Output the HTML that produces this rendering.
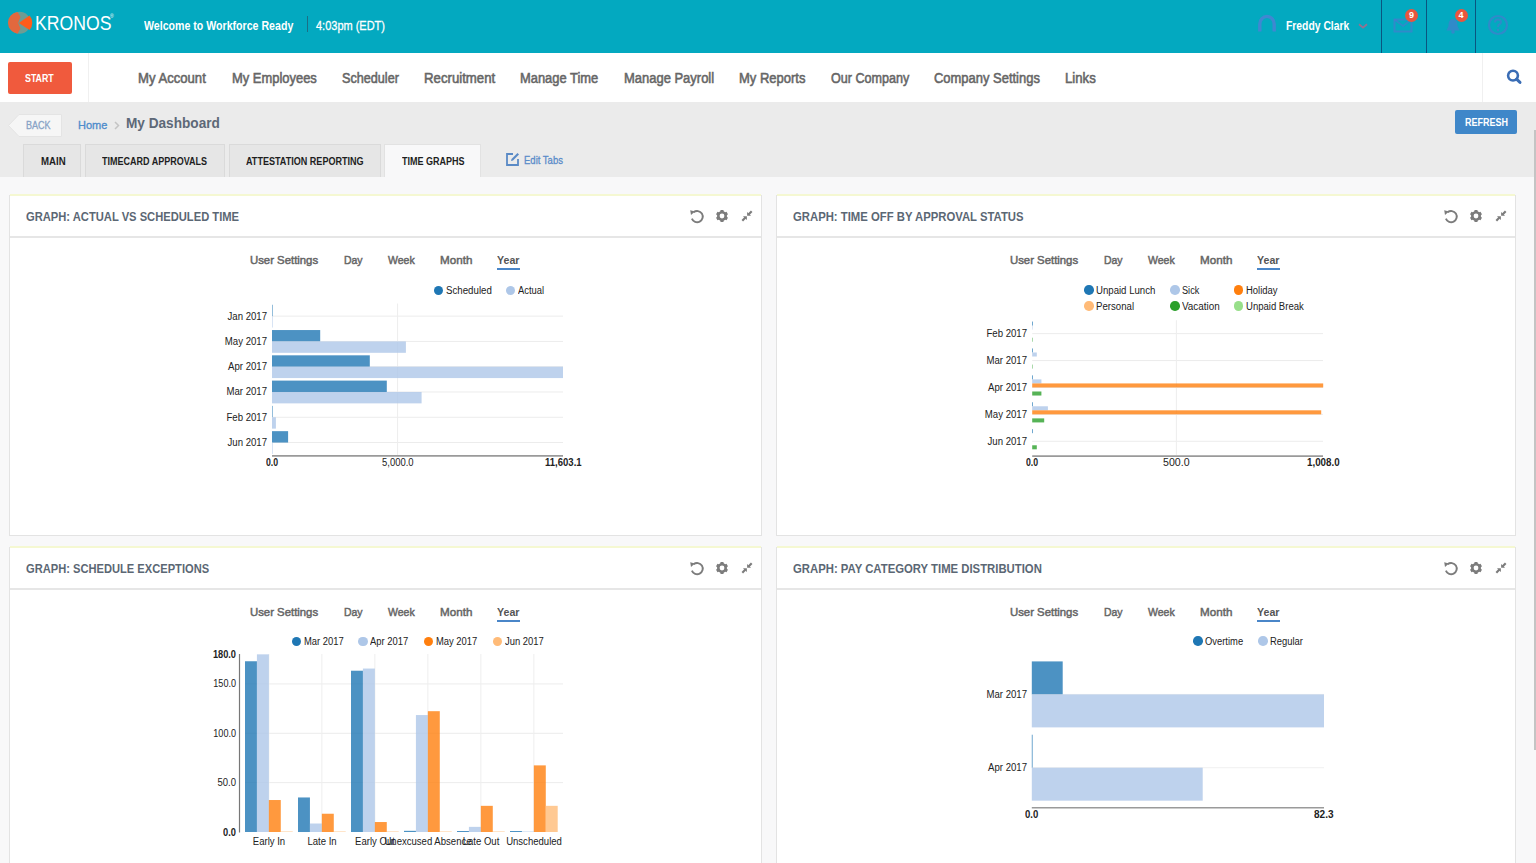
<!DOCTYPE html><html><head><meta charset="utf-8"><style>
*{margin:0;padding:0;box-sizing:border-box}
html,body{width:1536px;height:863px;overflow:hidden;background:#f8f8f9;font-family:"Liberation Sans",sans-serif;position:relative}
.a{position:absolute;white-space:nowrap}
svg text{font-family:"Liberation Sans",sans-serif}
</style></head><body>
<div class="a" style="left:0;top:0;width:1536px;height:53px;background:#03a9c0"></div>
<svg class="a" style="left:0;top:0" width="40" height="53" viewBox="0 0 40 53"><circle cx="19.6" cy="22.8" r="11" fill="#6f9c93"/><path d="M17.5 11.9 A11 11 0 0 0 17.5 33.7 L20.5 28.5 L18.2 23 L20.5 16.8 Z" fill="#e2683e"/><path d="M18.8 23 L29.6 15.6 A11 11 0 0 1 29.6 30 Z" fill="#ff5c1a"/></svg>
<div class="a" id="t1" style="left:34.95px;top:11px;font-size:20.50px;line-height:23px;font-weight:normal;color:#fff;transform:scaleX(0.8600);transform-origin:0 0;-webkit-text-stroke:0.5px #03a9c0;paint-order:stroke fill">KRONOS</div>
<div class="a" style="left:110px;top:13px;font-size:5px;color:#fff">&#174;</div>
<div class="a" id="t2" style="left:144.00px;top:18px;font-size:12.80px;line-height:15px;font-weight:bold;color:#fff;transform:scaleX(0.8286);transform-origin:0 0;">Welcome to Workforce Ready</div>
<div class="a" style="left:307px;top:16px;width:1px;height:16px;background:#1b6f86"></div>
<div class="a" id="t3" style="left:316.13px;top:18px;font-size:12.80px;line-height:15px;font-weight:normal;color:#fff;transform:scaleX(0.8583);transform-origin:0 0;-webkit-text-stroke:0.3px #fff">4:03pm (EDT)</div>
<svg class="a" style="left:1256px;top:14px" width="22" height="22" viewBox="0 0 22 22"><path d="M3.8 17.5 L3.8 10 A7.2 7.6 0 0 1 18.2 10 L18.2 17.5" fill="none" stroke="#8a60e6" stroke-width="3.4" opacity="0.45"/></svg>
<div class="a" id="t4" style="left:1286.00px;top:18px;font-size:12.80px;line-height:15px;font-weight:bold;color:#fff;transform:scaleX(0.8090);transform-origin:0 0;">Freddy Clark</div>
<svg class="a" style="left:1358px;top:23px" width="10" height="6" viewBox="0 0 10 6"><path d="M1 1.2 L5 4.6 L9 1.2" fill="none" stroke="#d4587a" stroke-width="1.8" opacity="0.7"/></svg>
<div class="a" style="left:1381px;top:0;width:1px;height:53px;background:#0a5580"></div>
<div class="a" style="left:1426px;top:0;width:1px;height:53px;background:#0a5580"></div>
<div class="a" style="left:1475px;top:0;width:1px;height:53px;background:#0a5580"></div>
<svg class="a" style="left:1392px;top:16px" width="22" height="18" viewBox="0 0 22 18">
<rect x="2.5" y="3.5" width="17" height="12" fill="none" stroke="#6f5fd6" stroke-width="2" opacity="0.42"/>
<path d="M2.5 3.5 L11 10 L19.5 3.5" fill="none" stroke="#6f5fd6" stroke-width="1.6" opacity="0.42"/></svg>
<svg class="a" style="left:1444px;top:17px" width="18" height="17" viewBox="0 0 18 17">
<path d="M9 2 C5 2 4.5 6 4.5 9 L2.5 13.5 L15.5 13.5 L13.5 9 C13.5 6 13 2 9 2 Z" fill="#6f5fd6" opacity="0.42"/>
<circle cx="9" cy="15" r="1.8" fill="#6f5fd6" opacity="0.42"/></svg>
<div class="a" style="left:1405.0px;top:9px;width:13px;height:13px;border-radius:50%;background:#e9553d;color:#fff;font-size:9px;font-weight:bold;text-align:center;line-height:13px">9</div>
<div class="a" style="left:1454.5px;top:9px;width:13px;height:13px;border-radius:50%;background:#e9553d;color:#fff;font-size:9px;font-weight:bold;text-align:center;line-height:13px">4</div>
<svg class="a" style="left:1487px;top:14px" width="22" height="22" viewBox="0 0 22 22">
<circle cx="11" cy="11" r="9" fill="none" stroke="#6f5fd6" stroke-width="2.2" opacity="0.42"/>
<path d="M8 8.5 Q8 5.5 11 5.5 Q14 5.5 14 8.3 Q14 10 11.5 11 L11 13" fill="none" stroke="#6f5fd6" stroke-width="2" opacity="0.42"/>
<circle cx="11" cy="16" r="1.2" fill="#6f5fd6" opacity="0.42"/></svg>
<div class="a" style="left:0;top:53px;width:1536px;height:49px;background:#fff"></div>
<div class="a" style="left:8px;top:62px;width:64px;height:32px;background:#f05a3d;border-radius:2px"></div>
<div class="a" id="t5" style="left:24.70px;top:72px;font-size:10.60px;line-height:12px;font-weight:bold;color:#fff;transform:scaleX(0.8331);transform-origin:0 0;">START</div>
<div class="a" style="left:88px;top:53px;width:1px;height:49px;background:#f0f0f0"></div>
<div class="a" style="left:1482px;top:53px;width:1px;height:49px;background:#f0f0f0"></div>
<div class="a" id="t6" style="left:138.12px;top:70px;font-size:14.00px;line-height:16px;font-weight:normal;color:#666;transform:scaleX(0.9368);transform-origin:0 0;-webkit-text-stroke:0.55px #666">My Account</div>
<div class="a" id="t7" style="left:231.73px;top:70px;font-size:14.00px;line-height:16px;font-weight:normal;color:#666;transform:scaleX(0.9239);transform-origin:0 0;-webkit-text-stroke:0.55px #666">My Employees</div>
<div class="a" id="t8" style="left:342.05px;top:70px;font-size:14.00px;line-height:16px;font-weight:normal;color:#666;transform:scaleX(0.9026);transform-origin:0 0;-webkit-text-stroke:0.55px #666">Scheduler</div>
<div class="a" id="t9" style="left:424.22px;top:70px;font-size:14.00px;line-height:16px;font-weight:normal;color:#666;transform:scaleX(0.9437);transform-origin:0 0;-webkit-text-stroke:0.55px #666">Recruitment</div>
<div class="a" id="t10" style="left:520.13px;top:70px;font-size:14.00px;line-height:16px;font-weight:normal;color:#666;transform:scaleX(0.9218);transform-origin:0 0;-webkit-text-stroke:0.55px #666">Manage Time</div>
<div class="a" id="t11" style="left:623.83px;top:70px;font-size:14.00px;line-height:16px;font-weight:normal;color:#666;transform:scaleX(0.9264);transform-origin:0 0;-webkit-text-stroke:0.55px #666">Manage Payroll</div>
<div class="a" id="t12" style="left:739.03px;top:70px;font-size:14.00px;line-height:16px;font-weight:normal;color:#666;transform:scaleX(0.9280);transform-origin:0 0;-webkit-text-stroke:0.55px #666">My Reports</div>
<div class="a" id="t13" style="left:830.95px;top:70px;font-size:14.00px;line-height:16px;font-weight:normal;color:#666;transform:scaleX(0.8986);transform-origin:0 0;-webkit-text-stroke:0.55px #666">Our Company</div>
<div class="a" id="t14" style="left:934.46px;top:70px;font-size:14.00px;line-height:16px;font-weight:normal;color:#666;transform:scaleX(0.9257);transform-origin:0 0;-webkit-text-stroke:0.55px #666">Company Settings</div>
<div class="a" id="t15" style="left:1065.12px;top:70px;font-size:14.00px;line-height:16px;font-weight:normal;color:#666;transform:scaleX(0.9431);transform-origin:0 0;-webkit-text-stroke:0.55px #666">Links</div>
<svg class="a" style="left:1505px;top:68px" width="18" height="18" viewBox="0 0 18 18"><circle cx="8" cy="7.6" r="4.9" fill="none" stroke="#3a6db5" stroke-width="2.6"/><path d="M11.6 11.2 L15 14.4" stroke="#3a6db5" stroke-width="3" stroke-linecap="round"/></svg>
<div class="a" style="left:0;top:102px;width:1536px;height:75px;background:#ebebeb"></div>
<svg class="a" style="left:8px;top:114px" width="54" height="23" viewBox="0 0 54 23">
<path d="M0.5 11.5 L11 0.5 L53.5 0.5 L53.5 22.5 L11 22.5 Z" fill="#f6f6f6" stroke="#e4e4e4"/></svg>
<div class="a" id="t16" style="left:26.13px;top:120px;font-size:10.20px;line-height:11px;font-weight:normal;color:#88a3c6;transform:scaleX(0.8850);transform-origin:0 0;-webkit-text-stroke:0.3px #88a3c6">BACK</div>
<div class="a" id="t17" style="left:77.86px;top:118px;font-size:11.80px;line-height:14px;font-weight:normal;color:#4f8ccb;transform:scaleX(0.9331);transform-origin:0 0;-webkit-text-stroke:0.35px #4f8ccb">Home</div>
<svg class="a" style="left:113px;top:121px" width="8" height="9" viewBox="0 0 8 9"><path d="M2 1 L5.5 4.5 L2 8" fill="none" stroke="#c4c4c4" stroke-width="1.5"/></svg>
<div class="a" id="t18" style="left:125.80px;top:115px;font-size:14.70px;line-height:16px;font-weight:bold;color:#5d6877;transform:scaleX(0.9274);transform-origin:0 0;">My Dashboard</div>
<div class="a" style="left:23px;top:144px;width:58px;height:33px;background:#e6e6e6;border:1px solid #dadada;border-bottom:none"></div>
<div class="a" id="t19" style="left:40.60px;top:156px;font-size:10.30px;line-height:11px;font-weight:bold;color:#1e1e1e;transform:scaleX(0.9353);transform-origin:0 0;">MAIN</div>
<div class="a" style="left:85px;top:144px;width:140px;height:33px;background:#e6e6e6;border:1px solid #dadada;border-bottom:none"></div>
<div class="a" id="t20" style="left:102.30px;top:156px;font-size:10.30px;line-height:11px;font-weight:bold;color:#1e1e1e;transform:scaleX(0.8744);transform-origin:0 0;">TIMECARD APPROVALS</div>
<div class="a" style="left:229px;top:144px;width:152px;height:33px;background:#e6e6e6;border:1px solid #dadada;border-bottom:none"></div>
<div class="a" id="t21" style="left:246.00px;top:156px;font-size:10.30px;line-height:11px;font-weight:bold;color:#1e1e1e;transform:scaleX(0.8786);transform-origin:0 0;">ATTESTATION REPORTING</div>
<div class="a" style="left:384px;top:144px;width:97px;height:33px;background:#f8f8f9;border:1px solid #e2e2e2;border-bottom:none"></div>
<div class="a" id="t22" style="left:401.90px;top:156px;font-size:10.30px;line-height:11px;font-weight:bold;color:#1e1e1e;transform:scaleX(0.8752);transform-origin:0 0;">TIME GRAPHS</div>
<svg class="a" style="left:505px;top:152px" width="15" height="15" viewBox="0 0 15 15">
<path d="M8 2 L2 2 L2 13 L13 13 L13 7" fill="none" stroke="#5a8ac6" stroke-width="1.8"/>
<path d="M6 9 L6.5 7 L12.5 1 L14 2.5 L8 8.5 Z" fill="#5a8ac6"/></svg>
<div class="a" id="t23" style="left:523.83px;top:154px;font-size:11.00px;line-height:12px;font-weight:normal;color:#5a8cc9;transform:scaleX(0.8644);transform-origin:0 0;-webkit-text-stroke:0.3px #5a8cc9">Edit Tabs</div>
<div class="a" style="left:1455px;top:110px;width:62px;height:24px;background:#3f87c9;border-radius:2px"></div>
<div class="a" id="t24" style="left:1465.00px;top:116px;font-size:10.50px;line-height:12px;font-weight:bold;color:#fff;transform:scaleX(0.8550);transform-origin:0 0;">REFRESH</div>
<div class="a" style="left:9px;top:195px;width:753px;height:341px;background:#fff;border:1px solid #e3e3e3;border-top:none"></div>
<div class="a" style="left:10px;top:194px;width:751px;height:2px;background:#f5f8d2"></div>
<div class="a" style="left:10px;top:236px;width:751px;height:2px;background:#e6e6e6"></div>
<div class="a" id="t25" style="left:26.20px;top:210px;font-size:12.40px;line-height:14px;font-weight:bold;color:#5b6774;transform:scaleX(0.9022);transform-origin:0 0;">GRAPH: ACTUAL VS SCHEDULED TIME</div>
<svg class="a" style="left:689.1px;top:208.1px" width="16" height="16" viewBox="0 0 16 16"><path d="M4.6 4.3 A5.6 5.6 0 1 1 2.9 10.6" fill="none" stroke="#7c7c7c" stroke-width="1.9"/><path d="M1.2 2.3 L6.0 3.6 L2.0 7.0 Z" fill="#7c7c7c"/></svg>
<svg class="a" style="left:713.6px;top:208.4px" width="16" height="16" viewBox="0 0 16 16"><path d="M9.71 3.30 L9.39 1.96 L6.61 1.96 L6.29 3.30 L4.79 4.17 L3.47 3.77 L2.07 6.19 L3.08 7.13 L3.08 8.87 L2.07 9.81 L3.47 12.23 L4.79 11.83 L6.29 12.70 L6.61 14.04 L9.39 14.04 L9.71 12.70 L11.21 11.83 L12.53 12.23 L13.93 9.81 L12.92 8.87 L12.92 7.13 L13.93 6.19 L12.53 3.77 L11.21 4.17 Z" fill="#7c7c7c"/><circle cx="8" cy="8" r="2.4" fill="#fff"/></svg>
<svg class="a" style="left:739.3px;top:207.9px" width="16" height="16" viewBox="0 0 16 16"><g transform="translate(8 8) scale(0.78) translate(-8 -8)"><path d="M2 14 L6 10" stroke="#7c7c7c" stroke-width="2.8"/><path d="M2.8 8.2 L7.8 8.2 L7.8 13.2 Z" fill="#7c7c7c"/><path d="M14 2 L10 6" stroke="#7c7c7c" stroke-width="2.8"/><path d="M13.2 7.8 L8.2 7.8 L8.2 2.8 Z" fill="#7c7c7c"/></g></svg>
<div class="a" style="left:776px;top:195px;width:740px;height:341px;background:#fff;border:1px solid #e3e3e3;border-top:none"></div>
<div class="a" style="left:777px;top:194px;width:738px;height:2px;background:#f5f8d2"></div>
<div class="a" style="left:777px;top:236px;width:738px;height:2px;background:#e6e6e6"></div>
<div class="a" id="t26" style="left:793.20px;top:210px;font-size:12.40px;line-height:14px;font-weight:bold;color:#5b6774;transform:scaleX(0.9133);transform-origin:0 0;">GRAPH: TIME OFF BY APPROVAL STATUS</div>
<svg class="a" style="left:1443.0px;top:208.1px" width="16" height="16" viewBox="0 0 16 16"><path d="M4.6 4.3 A5.6 5.6 0 1 1 2.9 10.6" fill="none" stroke="#7c7c7c" stroke-width="1.9"/><path d="M1.2 2.3 L6.0 3.6 L2.0 7.0 Z" fill="#7c7c7c"/></svg>
<svg class="a" style="left:1467.5px;top:208.4px" width="16" height="16" viewBox="0 0 16 16"><path d="M9.71 3.30 L9.39 1.96 L6.61 1.96 L6.29 3.30 L4.79 4.17 L3.47 3.77 L2.07 6.19 L3.08 7.13 L3.08 8.87 L2.07 9.81 L3.47 12.23 L4.79 11.83 L6.29 12.70 L6.61 14.04 L9.39 14.04 L9.71 12.70 L11.21 11.83 L12.53 12.23 L13.93 9.81 L12.92 8.87 L12.92 7.13 L13.93 6.19 L12.53 3.77 L11.21 4.17 Z" fill="#7c7c7c"/><circle cx="8" cy="8" r="2.4" fill="#fff"/></svg>
<svg class="a" style="left:1493.2px;top:207.9px" width="16" height="16" viewBox="0 0 16 16"><g transform="translate(8 8) scale(0.78) translate(-8 -8)"><path d="M2 14 L6 10" stroke="#7c7c7c" stroke-width="2.8"/><path d="M2.8 8.2 L7.8 8.2 L7.8 13.2 Z" fill="#7c7c7c"/><path d="M14 2 L10 6" stroke="#7c7c7c" stroke-width="2.8"/><path d="M13.2 7.8 L8.2 7.8 L8.2 2.8 Z" fill="#7c7c7c"/></g></svg>
<div class="a" style="left:9px;top:547px;width:753px;height:354px;background:#fff;border:1px solid #e3e3e3;border-top:none"></div>
<div class="a" style="left:10px;top:546px;width:751px;height:2px;background:#f5f8d2"></div>
<div class="a" style="left:10px;top:588px;width:751px;height:2px;background:#e6e6e6"></div>
<div class="a" id="t27" style="left:26.20px;top:562px;font-size:12.40px;line-height:14px;font-weight:bold;color:#5b6774;transform:scaleX(0.8987);transform-origin:0 0;">GRAPH: SCHEDULE EXCEPTIONS</div>
<svg class="a" style="left:689.1px;top:560.1px" width="16" height="16" viewBox="0 0 16 16"><path d="M4.6 4.3 A5.6 5.6 0 1 1 2.9 10.6" fill="none" stroke="#7c7c7c" stroke-width="1.9"/><path d="M1.2 2.3 L6.0 3.6 L2.0 7.0 Z" fill="#7c7c7c"/></svg>
<svg class="a" style="left:713.6px;top:560.4px" width="16" height="16" viewBox="0 0 16 16"><path d="M9.71 3.30 L9.39 1.96 L6.61 1.96 L6.29 3.30 L4.79 4.17 L3.47 3.77 L2.07 6.19 L3.08 7.13 L3.08 8.87 L2.07 9.81 L3.47 12.23 L4.79 11.83 L6.29 12.70 L6.61 14.04 L9.39 14.04 L9.71 12.70 L11.21 11.83 L12.53 12.23 L13.93 9.81 L12.92 8.87 L12.92 7.13 L13.93 6.19 L12.53 3.77 L11.21 4.17 Z" fill="#7c7c7c"/><circle cx="8" cy="8" r="2.4" fill="#fff"/></svg>
<svg class="a" style="left:739.3px;top:559.9px" width="16" height="16" viewBox="0 0 16 16"><g transform="translate(8 8) scale(0.78) translate(-8 -8)"><path d="M2 14 L6 10" stroke="#7c7c7c" stroke-width="2.8"/><path d="M2.8 8.2 L7.8 8.2 L7.8 13.2 Z" fill="#7c7c7c"/><path d="M14 2 L10 6" stroke="#7c7c7c" stroke-width="2.8"/><path d="M13.2 7.8 L8.2 7.8 L8.2 2.8 Z" fill="#7c7c7c"/></g></svg>
<div class="a" style="left:776px;top:547px;width:740px;height:354px;background:#fff;border:1px solid #e3e3e3;border-top:none"></div>
<div class="a" style="left:777px;top:546px;width:738px;height:2px;background:#f5f8d2"></div>
<div class="a" style="left:777px;top:588px;width:738px;height:2px;background:#e6e6e6"></div>
<div class="a" id="t28" style="left:793.20px;top:562px;font-size:12.40px;line-height:14px;font-weight:bold;color:#5b6774;transform:scaleX(0.9143);transform-origin:0 0;">GRAPH: PAY CATEGORY TIME DISTRIBUTION</div>
<svg class="a" style="left:1443.0px;top:560.1px" width="16" height="16" viewBox="0 0 16 16"><path d="M4.6 4.3 A5.6 5.6 0 1 1 2.9 10.6" fill="none" stroke="#7c7c7c" stroke-width="1.9"/><path d="M1.2 2.3 L6.0 3.6 L2.0 7.0 Z" fill="#7c7c7c"/></svg>
<svg class="a" style="left:1467.5px;top:560.4px" width="16" height="16" viewBox="0 0 16 16"><path d="M9.71 3.30 L9.39 1.96 L6.61 1.96 L6.29 3.30 L4.79 4.17 L3.47 3.77 L2.07 6.19 L3.08 7.13 L3.08 8.87 L2.07 9.81 L3.47 12.23 L4.79 11.83 L6.29 12.70 L6.61 14.04 L9.39 14.04 L9.71 12.70 L11.21 11.83 L12.53 12.23 L13.93 9.81 L12.92 8.87 L12.92 7.13 L13.93 6.19 L12.53 3.77 L11.21 4.17 Z" fill="#7c7c7c"/><circle cx="8" cy="8" r="2.4" fill="#fff"/></svg>
<svg class="a" style="left:1493.2px;top:559.9px" width="16" height="16" viewBox="0 0 16 16"><g transform="translate(8 8) scale(0.78) translate(-8 -8)"><path d="M2 14 L6 10" stroke="#7c7c7c" stroke-width="2.8"/><path d="M2.8 8.2 L7.8 8.2 L7.8 13.2 Z" fill="#7c7c7c"/><path d="M14 2 L10 6" stroke="#7c7c7c" stroke-width="2.8"/><path d="M13.2 7.8 L8.2 7.8 L8.2 2.8 Z" fill="#7c7c7c"/></g></svg>
<div class="a" id="t29" style="left:250.44px;top:253px;font-size:11.60px;line-height:13px;font-weight:normal;color:#666;transform:scaleX(0.9787);transform-origin:0 0;-webkit-text-stroke:0.5px #666">User Settings</div>
<div class="a" id="t30" style="left:343.73px;top:253px;font-size:11.60px;line-height:13px;font-weight:normal;color:#666;transform:scaleX(0.9005);transform-origin:0 0;-webkit-text-stroke:0.5px #666">Day</div>
<div class="a" id="t31" style="left:387.73px;top:253px;font-size:11.60px;line-height:13px;font-weight:normal;color:#666;transform:scaleX(0.9061);transform-origin:0 0;-webkit-text-stroke:0.5px #666">Week</div>
<div class="a" id="t32" style="left:439.85px;top:253px;font-size:11.60px;line-height:13px;font-weight:normal;color:#666;transform:scaleX(1.0039);transform-origin:0 0;-webkit-text-stroke:0.5px #666">Month</div>
<div class="a" id="t33" style="left:497.40px;top:253px;font-size:11.60px;line-height:13px;font-weight:bold;color:#555;transform:scaleX(0.9164);transform-origin:0 0;">Year</div>
<div class="a" style="left:497.4px;top:267.8px;width:23px;height:2px;background:#4a86c8"></div>
<div class="a" id="t34" style="left:1010.45px;top:253px;font-size:11.60px;line-height:13px;font-weight:normal;color:#666;transform:scaleX(0.9787);transform-origin:0 0;-webkit-text-stroke:0.5px #666">User Settings</div>
<div class="a" id="t35" style="left:1103.72px;top:253px;font-size:11.60px;line-height:13px;font-weight:normal;color:#666;transform:scaleX(0.9005);transform-origin:0 0;-webkit-text-stroke:0.5px #666">Day</div>
<div class="a" id="t36" style="left:1147.73px;top:253px;font-size:11.60px;line-height:13px;font-weight:normal;color:#666;transform:scaleX(0.9061);transform-origin:0 0;-webkit-text-stroke:0.5px #666">Week</div>
<div class="a" id="t37" style="left:1199.85px;top:253px;font-size:11.60px;line-height:13px;font-weight:normal;color:#666;transform:scaleX(1.0039);transform-origin:0 0;-webkit-text-stroke:0.5px #666">Month</div>
<div class="a" id="t38" style="left:1257.40px;top:253px;font-size:11.60px;line-height:13px;font-weight:bold;color:#555;transform:scaleX(0.9164);transform-origin:0 0;">Year</div>
<div class="a" style="left:1257.4px;top:267.8px;width:23px;height:2px;background:#4a86c8"></div>
<div class="a" id="t39" style="left:250.44px;top:605px;font-size:11.60px;line-height:13px;font-weight:normal;color:#666;transform:scaleX(0.9787);transform-origin:0 0;-webkit-text-stroke:0.5px #666">User Settings</div>
<div class="a" id="t40" style="left:343.73px;top:605px;font-size:11.60px;line-height:13px;font-weight:normal;color:#666;transform:scaleX(0.9005);transform-origin:0 0;-webkit-text-stroke:0.5px #666">Day</div>
<div class="a" id="t41" style="left:387.73px;top:605px;font-size:11.60px;line-height:13px;font-weight:normal;color:#666;transform:scaleX(0.9061);transform-origin:0 0;-webkit-text-stroke:0.5px #666">Week</div>
<div class="a" id="t42" style="left:439.85px;top:605px;font-size:11.60px;line-height:13px;font-weight:normal;color:#666;transform:scaleX(1.0039);transform-origin:0 0;-webkit-text-stroke:0.5px #666">Month</div>
<div class="a" id="t43" style="left:497.40px;top:605px;font-size:11.60px;line-height:13px;font-weight:bold;color:#555;transform:scaleX(0.9164);transform-origin:0 0;">Year</div>
<div class="a" style="left:497.4px;top:619.8px;width:23px;height:2px;background:#4a86c8"></div>
<div class="a" id="t44" style="left:1010.45px;top:605px;font-size:11.60px;line-height:13px;font-weight:normal;color:#666;transform:scaleX(0.9787);transform-origin:0 0;-webkit-text-stroke:0.5px #666">User Settings</div>
<div class="a" id="t45" style="left:1103.72px;top:605px;font-size:11.60px;line-height:13px;font-weight:normal;color:#666;transform:scaleX(0.9005);transform-origin:0 0;-webkit-text-stroke:0.5px #666">Day</div>
<div class="a" id="t46" style="left:1147.73px;top:605px;font-size:11.60px;line-height:13px;font-weight:normal;color:#666;transform:scaleX(0.9061);transform-origin:0 0;-webkit-text-stroke:0.5px #666">Week</div>
<div class="a" id="t47" style="left:1199.85px;top:605px;font-size:11.60px;line-height:13px;font-weight:normal;color:#666;transform:scaleX(1.0039);transform-origin:0 0;-webkit-text-stroke:0.5px #666">Month</div>
<div class="a" id="t48" style="left:1257.40px;top:605px;font-size:11.60px;line-height:13px;font-weight:bold;color:#555;transform:scaleX(0.9164);transform-origin:0 0;">Year</div>
<div class="a" style="left:1257.4px;top:619.8px;width:23px;height:2px;background:#4a86c8"></div>
<div class="a" style="left:433.90px;top:285.50px;width:9.6px;height:9.6px;border-radius:50%;background:#1f77b4"></div>
<div class="a" id="t49" style="left:445.70px;top:285px;font-size:10.00px;line-height:11px;font-weight:normal;color:#222;transform:scaleX(0.9700);transform-origin:0 0;">Scheduled</div>
<div class="a" style="left:505.70px;top:285.50px;width:9.6px;height:9.6px;border-radius:50%;background:#aec7e8"></div>
<div class="a" id="t50" style="left:517.50px;top:285px;font-size:10.00px;line-height:11px;font-weight:normal;color:#222;transform:scaleX(0.9400);transform-origin:0 0;">Actual</div>
<svg class="a" style="left:0;top:0" width="1536" height="863" viewBox="0 0 1536 863">
<line x1="272.00" y1="316.14" x2="563.00" y2="316.14" stroke="#ececec" stroke-width="1.00"/>
<line x1="272.00" y1="341.42" x2="563.00" y2="341.42" stroke="#ececec" stroke-width="1.00"/>
<line x1="272.00" y1="366.70" x2="563.00" y2="366.70" stroke="#ececec" stroke-width="1.00"/>
<line x1="272.00" y1="391.98" x2="563.00" y2="391.98" stroke="#ececec" stroke-width="1.00"/>
<line x1="272.00" y1="417.26" x2="563.00" y2="417.26" stroke="#ececec" stroke-width="1.00"/>
<line x1="272.00" y1="442.54" x2="563.00" y2="442.54" stroke="#ececec" stroke-width="1.00"/>
<line x1="397.60" y1="303.50" x2="397.60" y2="455.00" stroke="#ededed" stroke-width="1.00"/>
<rect x="272.00" y="304.76" width="0.60" height="11.38" fill="#1f77b4" fill-opacity="0.80"/>
<rect x="272.00" y="316.14" width="0.60" height="11.38" fill="#aec7e8" fill-opacity="0.80"/>
<rect x="272.00" y="330.04" width="48.20" height="11.38" fill="#1f77b4" fill-opacity="0.80"/>
<rect x="272.00" y="341.42" width="133.90" height="11.38" fill="#aec7e8" fill-opacity="0.80"/>
<rect x="272.00" y="355.32" width="97.80" height="11.38" fill="#1f77b4" fill-opacity="0.80"/>
<rect x="272.00" y="366.70" width="291.00" height="11.38" fill="#aec7e8" fill-opacity="0.80"/>
<rect x="272.00" y="380.60" width="114.80" height="11.38" fill="#1f77b4" fill-opacity="0.80"/>
<rect x="272.00" y="391.98" width="149.60" height="11.38" fill="#aec7e8" fill-opacity="0.80"/>
<rect x="272.00" y="405.88" width="0.60" height="11.38" fill="#1f77b4" fill-opacity="0.80"/>
<rect x="272.00" y="417.26" width="3.90" height="11.38" fill="#aec7e8" fill-opacity="0.80"/>
<rect x="272.00" y="431.16" width="16.10" height="11.38" fill="#1f77b4" fill-opacity="0.80"/>
<rect x="272.00" y="442.54" width="0.60" height="11.38" fill="#aec7e8" fill-opacity="0.80"/>
<line x1="272.00" y1="455.90" x2="563.00" y2="455.90" stroke="#9a9a9a" stroke-width="1.60"/>
</svg>
<div class="a" id="t51" style="left:-132.80px;width:400px;text-align:right;top:311px;font-size:10.00px;line-height:11px;font-weight:normal;color:#222;transform:scaleX(0.9600);transform-origin:100% 0;">Jan 2017</div>
<div class="a" id="t52" style="left:-132.80px;width:400px;text-align:right;top:336px;font-size:10.00px;line-height:11px;font-weight:normal;color:#222;transform:scaleX(0.9600);transform-origin:100% 0;">May 2017</div>
<div class="a" id="t53" style="left:-132.80px;width:400px;text-align:right;top:361px;font-size:10.00px;line-height:11px;font-weight:normal;color:#222;transform:scaleX(0.9600);transform-origin:100% 0;">Apr 2017</div>
<div class="a" id="t54" style="left:-132.80px;width:400px;text-align:right;top:386px;font-size:10.00px;line-height:11px;font-weight:normal;color:#222;transform:scaleX(0.9600);transform-origin:100% 0;">Mar 2017</div>
<div class="a" id="t55" style="left:-132.80px;width:400px;text-align:right;top:412px;font-size:10.00px;line-height:11px;font-weight:normal;color:#222;transform:scaleX(0.9600);transform-origin:100% 0;">Feb 2017</div>
<div class="a" id="t56" style="left:-132.80px;width:400px;text-align:right;top:437px;font-size:10.00px;line-height:11px;font-weight:normal;color:#222;transform:scaleX(0.9600);transform-origin:100% 0;">Jun 2017</div>
<div class="a" id="t57" style="left:265.50px;top:457px;font-size:10.00px;line-height:11px;font-weight:bold;color:#222;transform:scaleX(0.8717);transform-origin:0 0;">0.0</div>
<div class="a" id="t58" style="left:381.60px;top:457px;font-size:10.00px;line-height:11px;font-weight:normal;color:#222;transform:scaleX(0.9467);transform-origin:0 0;">5,000.0</div>
<div class="a" id="t59" style="left:544.50px;top:457px;font-size:10.00px;line-height:11px;font-weight:bold;color:#222;transform:scaleX(0.9533);transform-origin:0 0;">11,603.1</div>
<div class="a" style="left:1084.40px;top:285.40px;width:9.6px;height:9.6px;border-radius:50%;background:#1f77b4"></div>
<div class="a" id="t60" style="left:1096.20px;top:285px;font-size:10.00px;line-height:11px;font-weight:normal;color:#222;transform:scaleX(0.9615);transform-origin:0 0;">Unpaid Lunch</div>
<div class="a" style="left:1170.00px;top:285.40px;width:9.6px;height:9.6px;border-radius:50%;background:#aec7e8"></div>
<div class="a" id="t61" style="left:1181.80px;top:285px;font-size:10.00px;line-height:11px;font-weight:normal;color:#222;transform:scaleX(0.9150);transform-origin:0 0;">Sick</div>
<div class="a" style="left:1233.90px;top:285.40px;width:9.6px;height:9.6px;border-radius:50%;background:#ff7f0e"></div>
<div class="a" id="t62" style="left:1245.70px;top:285px;font-size:10.00px;line-height:11px;font-weight:normal;color:#222;transform:scaleX(0.9475);transform-origin:0 0;">Holiday</div>
<div class="a" style="left:1084.40px;top:301.45px;width:9.6px;height:9.6px;border-radius:50%;background:#ffbb78"></div>
<div class="a" id="t63" style="left:1096.20px;top:301px;font-size:10.00px;line-height:11px;font-weight:normal;color:#222;transform:scaleX(0.9632);transform-origin:0 0;">Personal</div>
<div class="a" style="left:1170.00px;top:301.45px;width:9.6px;height:9.6px;border-radius:50%;background:#2ca02c"></div>
<div class="a" id="t64" style="left:1181.80px;top:301px;font-size:10.00px;line-height:11px;font-weight:normal;color:#222;transform:scaleX(0.9890);transform-origin:0 0;">Vacation</div>
<div class="a" style="left:1233.90px;top:301.45px;width:9.6px;height:9.6px;border-radius:50%;background:#98df8a"></div>
<div class="a" id="t65" style="left:1245.70px;top:301px;font-size:10.00px;line-height:11px;font-weight:normal;color:#222;transform:scaleX(0.9531);transform-origin:0 0;">Unpaid Break</div>
<svg class="a" style="left:0;top:0" width="1536" height="863" viewBox="0 0 1536 863">
<line x1="1032.20" y1="333.65" x2="1323.00" y2="333.65" stroke="#ececec" stroke-width="1.00"/>
<line x1="1032.20" y1="360.55" x2="1323.00" y2="360.55" stroke="#ececec" stroke-width="1.00"/>
<line x1="1032.20" y1="387.45" x2="1323.00" y2="387.45" stroke="#ececec" stroke-width="1.00"/>
<line x1="1032.20" y1="414.35" x2="1323.00" y2="414.35" stroke="#ececec" stroke-width="1.00"/>
<line x1="1032.20" y1="441.25" x2="1323.00" y2="441.25" stroke="#ececec" stroke-width="1.00"/>
<line x1="1176.40" y1="320.20" x2="1176.40" y2="455.00" stroke="#ededed" stroke-width="1.00"/>
<rect x="1032.20" y="321.55" width="0.80" height="4.04" fill="#1f77b4" fill-opacity="0.80"/>
<rect x="1032.20" y="325.58" width="0.50" height="4.04" fill="#aec7e8" fill-opacity="0.80"/>
<rect x="1032.20" y="337.69" width="0.50" height="4.04" fill="#2ca02c" fill-opacity="0.80"/>
<rect x="1032.20" y="348.44" width="0.80" height="4.04" fill="#1f77b4" fill-opacity="0.80"/>
<rect x="1032.20" y="352.48" width="4.60" height="4.04" fill="#aec7e8" fill-opacity="0.80"/>
<rect x="1032.20" y="364.58" width="0.50" height="4.04" fill="#2ca02c" fill-opacity="0.80"/>
<rect x="1032.20" y="375.35" width="0.80" height="4.04" fill="#1f77b4" fill-opacity="0.80"/>
<rect x="1032.20" y="379.38" width="9.20" height="4.04" fill="#aec7e8" fill-opacity="0.80"/>
<rect x="1032.20" y="383.42" width="291.00" height="4.04" fill="#ff7f0e" fill-opacity="0.80"/>
<rect x="1032.20" y="391.49" width="9.20" height="4.04" fill="#2ca02c" fill-opacity="0.80"/>
<rect x="1032.20" y="402.25" width="0.80" height="4.04" fill="#1f77b4" fill-opacity="0.80"/>
<rect x="1032.20" y="406.28" width="15.70" height="4.04" fill="#aec7e8" fill-opacity="0.80"/>
<rect x="1032.20" y="410.31" width="289.00" height="4.04" fill="#ff7f0e" fill-opacity="0.80"/>
<rect x="1032.20" y="418.38" width="12.00" height="4.04" fill="#2ca02c" fill-opacity="0.80"/>
<rect x="1032.20" y="429.14" width="0.80" height="4.04" fill="#1f77b4" fill-opacity="0.80"/>
<rect x="1032.20" y="445.28" width="4.60" height="4.04" fill="#2ca02c" fill-opacity="0.80"/>
<line x1="1032.20" y1="456.10" x2="1323.00" y2="456.10" stroke="#9a9a9a" stroke-width="1.60"/>
</svg>
<div class="a" id="t66" style="left:627.30px;width:400px;text-align:right;top:328px;font-size:10.00px;line-height:11px;font-weight:normal;color:#222;transform:scaleX(0.9600);transform-origin:100% 0;">Feb 2017</div>
<div class="a" id="t67" style="left:627.30px;width:400px;text-align:right;top:355px;font-size:10.00px;line-height:11px;font-weight:normal;color:#222;transform:scaleX(0.9600);transform-origin:100% 0;">Mar 2017</div>
<div class="a" id="t68" style="left:627.30px;width:400px;text-align:right;top:382px;font-size:10.00px;line-height:11px;font-weight:normal;color:#222;transform:scaleX(0.9600);transform-origin:100% 0;">Apr 2017</div>
<div class="a" id="t69" style="left:627.30px;width:400px;text-align:right;top:409px;font-size:10.00px;line-height:11px;font-weight:normal;color:#222;transform:scaleX(0.9600);transform-origin:100% 0;">May 2017</div>
<div class="a" id="t70" style="left:627.30px;width:400px;text-align:right;top:436px;font-size:10.00px;line-height:11px;font-weight:normal;color:#222;transform:scaleX(0.9600);transform-origin:100% 0;">Jun 2017</div>
<div class="a" id="t71" style="left:1025.70px;top:457px;font-size:10.00px;line-height:11px;font-weight:bold;color:#222;transform:scaleX(0.8717);transform-origin:0 0;">0.0</div>
<div class="a" id="t72" style="left:1163.00px;top:457px;font-size:10.00px;line-height:11px;font-weight:normal;color:#222;transform:scaleX(1.0604);transform-origin:0 0;">500.0</div>
<div class="a" id="t73" style="left:1307.00px;top:457px;font-size:10.00px;line-height:11px;font-weight:bold;color:#222;transform:scaleX(0.9763);transform-origin:0 0;">1,008.0</div>
<div class="a" style="left:291.70px;top:636.50px;width:9.6px;height:9.6px;border-radius:50%;background:#1f77b4"></div>
<div class="a" id="t74" style="left:303.50px;top:636px;font-size:10.00px;line-height:11px;font-weight:normal;color:#222;transform:scaleX(0.9400);transform-origin:0 0;">Mar 2017</div>
<div class="a" style="left:358.20px;top:636.50px;width:9.6px;height:9.6px;border-radius:50%;background:#aec7e8"></div>
<div class="a" id="t75" style="left:370.00px;top:636px;font-size:10.00px;line-height:11px;font-weight:normal;color:#222;transform:scaleX(0.9400);transform-origin:0 0;">Apr 2017</div>
<div class="a" style="left:423.70px;top:636.50px;width:9.6px;height:9.6px;border-radius:50%;background:#ff7f0e"></div>
<div class="a" id="t76" style="left:435.50px;top:636px;font-size:10.00px;line-height:11px;font-weight:normal;color:#222;transform:scaleX(0.9400);transform-origin:0 0;">May 2017</div>
<div class="a" style="left:492.70px;top:636.50px;width:9.6px;height:9.6px;border-radius:50%;background:#ffbb78"></div>
<div class="a" id="t77" style="left:504.50px;top:636px;font-size:10.00px;line-height:11px;font-weight:normal;color:#222;transform:scaleX(0.9400);transform-origin:0 0;">Jun 2017</div>
<svg class="a" style="left:0;top:0" width="1536" height="863" viewBox="0 0 1536 863">
<line x1="245.00" y1="782.65" x2="563.00" y2="782.65" stroke="#ececec" stroke-width="1.00"/>
<line x1="245.00" y1="733.30" x2="563.00" y2="733.30" stroke="#ececec" stroke-width="1.00"/>
<line x1="245.00" y1="683.95" x2="563.00" y2="683.95" stroke="#ececec" stroke-width="1.00"/>
<line x1="268.85" y1="654.00" x2="268.85" y2="832.00" stroke="#eeeeee" stroke-width="1.00"/>
<line x1="321.85" y1="654.00" x2="321.85" y2="832.00" stroke="#eeeeee" stroke-width="1.00"/>
<line x1="374.85" y1="654.00" x2="374.85" y2="832.00" stroke="#eeeeee" stroke-width="1.00"/>
<line x1="427.85" y1="654.00" x2="427.85" y2="832.00" stroke="#eeeeee" stroke-width="1.00"/>
<line x1="480.85" y1="654.00" x2="480.85" y2="832.00" stroke="#eeeeee" stroke-width="1.00"/>
<line x1="533.85" y1="654.00" x2="533.85" y2="832.00" stroke="#eeeeee" stroke-width="1.00"/>
<rect x="245.00" y="661.25" width="11.93" height="170.75" fill="#1f77b4" fill-opacity="0.80"/>
<rect x="256.93" y="654.34" width="11.93" height="177.66" fill="#aec7e8" fill-opacity="0.80"/>
<rect x="268.85" y="800.02" width="11.93" height="31.98" fill="#ff7f0e" fill-opacity="0.80"/>
<rect x="280.77" y="831.51" width="11.93" height="0.49" fill="#ffbb78" fill-opacity="0.80"/>
<rect x="298.00" y="797.46" width="11.93" height="34.55" fill="#1f77b4" fill-opacity="0.80"/>
<rect x="309.93" y="823.51" width="11.93" height="8.49" fill="#aec7e8" fill-opacity="0.80"/>
<rect x="321.85" y="813.74" width="11.93" height="18.26" fill="#ff7f0e" fill-opacity="0.80"/>
<rect x="333.77" y="831.51" width="11.93" height="0.49" fill="#ffbb78" fill-opacity="0.80"/>
<rect x="351.00" y="670.72" width="11.93" height="161.28" fill="#1f77b4" fill-opacity="0.80"/>
<rect x="362.93" y="668.55" width="11.93" height="163.45" fill="#aec7e8" fill-opacity="0.80"/>
<rect x="374.85" y="822.03" width="11.93" height="9.97" fill="#ff7f0e" fill-opacity="0.80"/>
<rect x="386.77" y="831.51" width="11.93" height="0.49" fill="#ffbb78" fill-opacity="0.80"/>
<rect x="404.00" y="830.82" width="11.93" height="1.18" fill="#1f77b4" fill-opacity="0.80"/>
<rect x="415.93" y="715.04" width="11.93" height="116.96" fill="#aec7e8" fill-opacity="0.80"/>
<rect x="427.85" y="711.19" width="11.93" height="120.81" fill="#ff7f0e" fill-opacity="0.80"/>
<rect x="439.77" y="831.51" width="11.93" height="0.49" fill="#ffbb78" fill-opacity="0.80"/>
<rect x="457.00" y="831.01" width="11.93" height="0.99" fill="#1f77b4" fill-opacity="0.80"/>
<rect x="468.93" y="826.87" width="11.93" height="5.13" fill="#aec7e8" fill-opacity="0.80"/>
<rect x="480.85" y="805.84" width="11.93" height="26.16" fill="#ff7f0e" fill-opacity="0.80"/>
<rect x="492.77" y="831.51" width="11.93" height="0.49" fill="#ffbb78" fill-opacity="0.80"/>
<rect x="510.00" y="831.01" width="11.93" height="0.99" fill="#1f77b4" fill-opacity="0.80"/>
<rect x="521.92" y="831.51" width="11.93" height="0.49" fill="#aec7e8" fill-opacity="0.80"/>
<rect x="533.85" y="765.38" width="11.93" height="66.62" fill="#ff7f0e" fill-opacity="0.80"/>
<rect x="545.77" y="805.84" width="11.93" height="26.16" fill="#ffbb78" fill-opacity="0.80"/>
<line x1="239.50" y1="654.00" x2="239.50" y2="832.50" stroke="#777" stroke-width="1.20"/>
</svg>
<div class="a" id="t78" style="left:-163.60px;width:400px;text-align:right;top:649px;font-size:10.00px;line-height:11px;font-weight:bold;color:#222;transform:scaleX(0.9229);transform-origin:100% 0;">180.0</div>
<div class="a" id="t79" style="left:-163.60px;width:400px;text-align:right;top:678px;font-size:10.00px;line-height:11px;font-weight:normal;color:#222;transform:scaleX(0.9072);transform-origin:100% 0;">150.0</div>
<div class="a" id="t80" style="left:-163.60px;width:400px;text-align:right;top:728px;font-size:10.00px;line-height:11px;font-weight:normal;color:#222;transform:scaleX(0.9072);transform-origin:100% 0;">100.0</div>
<div class="a" id="t81" style="left:-163.62px;width:400px;text-align:right;top:777px;font-size:10.00px;line-height:11px;font-weight:normal;color:#222;transform:scaleX(0.9497);transform-origin:100% 0;">50.0</div>
<div class="a" id="t82" style="left:-163.61px;width:400px;text-align:right;top:827px;font-size:10.00px;line-height:11px;font-weight:bold;color:#222;transform:scaleX(0.9275);transform-origin:100% 0;">0.0</div>
<div class="a" id="t83" style="left:68.85px;width:400px;text-align:center;top:836px;font-size:10.00px;line-height:11px;font-weight:normal;color:#222;transform:scaleX(0.9550);transform-origin:50% 0;">Early In</div>
<div class="a" id="t84" style="left:121.85px;width:400px;text-align:center;top:836px;font-size:10.00px;line-height:11px;font-weight:normal;color:#222;transform:scaleX(0.9550);transform-origin:50% 0;">Late In</div>
<div class="a" id="t85" style="left:174.85px;width:400px;text-align:center;top:836px;font-size:10.00px;line-height:11px;font-weight:normal;color:#222;transform:scaleX(0.9550);transform-origin:50% 0;">Early Out</div>
<div class="a" id="t86" style="left:227.85px;width:400px;text-align:center;top:836px;font-size:10.00px;line-height:11px;font-weight:normal;color:#222;transform:scaleX(0.9550);transform-origin:50% 0;">Unexcused Absence</div>
<div class="a" id="t87" style="left:280.85px;width:400px;text-align:center;top:836px;font-size:10.00px;line-height:11px;font-weight:normal;color:#222;transform:scaleX(0.9550);transform-origin:50% 0;">Late Out</div>
<div class="a" id="t88" style="left:333.85px;width:400px;text-align:center;top:836px;font-size:10.00px;line-height:11px;font-weight:normal;color:#222;transform:scaleX(0.9550);transform-origin:50% 0;">Unscheduled</div>
<div class="a" style="left:1193.20px;top:636.20px;width:9.6px;height:9.6px;border-radius:50%;background:#1f77b4"></div>
<div class="a" id="t89" style="left:1205.00px;top:636px;font-size:10.00px;line-height:11px;font-weight:normal;color:#222;transform:scaleX(0.9400);transform-origin:0 0;">Overtime</div>
<div class="a" style="left:1258.20px;top:636.20px;width:9.6px;height:9.6px;border-radius:50%;background:#aec7e8"></div>
<div class="a" id="t90" style="left:1270.00px;top:636px;font-size:10.00px;line-height:11px;font-weight:normal;color:#222;transform:scaleX(0.9400);transform-origin:0 0;">Regular</div>
<svg class="a" style="left:0;top:0" width="1536" height="863" viewBox="0 0 1536 863">
<line x1="1031.80" y1="694.40" x2="1324.00" y2="694.40" stroke="#f0f0f0" stroke-width="1.00"/>
<line x1="1031.80" y1="767.70" x2="1324.00" y2="767.70" stroke="#f0f0f0" stroke-width="1.00"/>
<rect x="1031.80" y="661.41" width="30.90" height="32.98" fill="#1f77b4" fill-opacity="0.80"/>
<rect x="1031.80" y="694.40" width="292.20" height="32.98" fill="#aec7e8" fill-opacity="0.80"/>
<rect x="1031.80" y="734.71" width="0.80" height="32.98" fill="#1f77b4" fill-opacity="0.80"/>
<rect x="1031.80" y="767.70" width="170.90" height="32.98" fill="#aec7e8" fill-opacity="0.80"/>
<line x1="1031.80" y1="807.80" x2="1324.00" y2="807.80" stroke="#9a9a9a" stroke-width="1.60"/>
</svg>
<div class="a" id="t91" style="left:627.20px;width:400px;text-align:right;top:689px;font-size:10.00px;line-height:11px;font-weight:normal;color:#222;transform:scaleX(0.9600);transform-origin:100% 0;">Mar 2017</div>
<div class="a" id="t92" style="left:627.20px;width:400px;text-align:right;top:762px;font-size:10.00px;line-height:11px;font-weight:normal;color:#222;transform:scaleX(0.9600);transform-origin:100% 0;">Apr 2017</div>
<div class="a" id="t93" style="left:1025.20px;top:809px;font-size:10.00px;line-height:11px;font-weight:bold;color:#222;transform:scaleX(0.9554);transform-origin:0 0;">0.0</div>
<div class="a" id="t94" style="left:1314.00px;top:809px;font-size:10.00px;line-height:11px;font-weight:bold;color:#222;transform:scaleX(1.0050);transform-origin:0 0;">82.3</div>
<div class="a" style="left:1534px;top:130px;width:2px;height:620px;background:#c4c4c4"></div>
</body></html>
